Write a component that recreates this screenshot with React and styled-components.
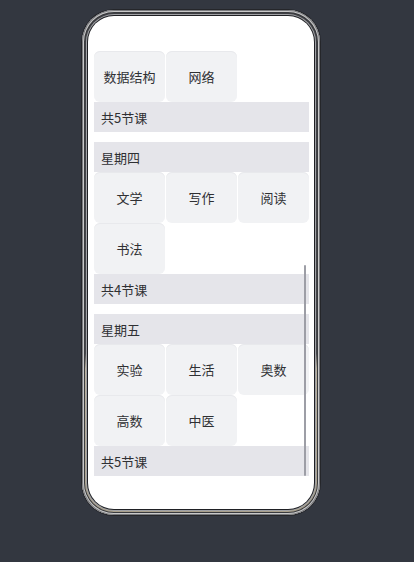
import React from "react";
import styled, { createGlobalStyle } from "styled-components";

const Global = createGlobalStyle`
  html, body { margin: 0; padding: 0; background: #333740; }
  body { font-family: "Noto Sans CJK SC", "Noto Sans", sans-serif; }
`;

const Stage = styled.div`
  width: 414px;
  height: 562px;
  padding: 10px 0 0 82px;
  box-sizing: border-box;
`;

const Frame = styled.div`
  width: 238px;
  height: 505px;
  box-sizing: border-box;
  padding: 6px;
  border-radius: 32px;
  background: linear-gradient(180deg, #3e3f43 0%, #46474b 68%, #b9b09c 71%, #a89f8b 100%);
  box-shadow: inset 0 0 0 1px #7a7b7f, inset 0 0 0 2px #c9c9c9, inset 0 0 0 3px #3a3b3f, 0 0 0 1px #25262a;
`;

const Screen = styled.div`
  position: relative;
  width: 226px;
  height: 493px;
  border-radius: 26px;
  background: #ffffff;
  overflow: hidden;
  box-shadow: 0 0 0 1px #1f2024, 0 0 0 2px #a0a1a5;
`;

const List = styled.div`
  display: flex;
  flex-direction: column;
  gap: 10px;
  padding: 35px 5px 0 6px;
`;

const Section = styled.div`
  display: flex;
  flex-direction: column;
`;

const Bar = styled.div`
  height: 30px;
  display: flex;
  align-items: center;
  padding-left: 7px;
  background: #e5e5ea;
  color: #2f3033;
  font-size: 13px;
`;

const Grid = styled.div`
  display: grid;
  grid-template-columns: repeat(3, 71px);
  column-gap: 1px;
`;

const Card = styled.div`
  height: 51px;
  display: flex;
  align-items: center;
  justify-content: center;
  background: #f1f2f4;
  border-radius: 6px;
  color: #2f3033;
  font-size: 13px;
  box-shadow: inset 0 1px 0 #e8e9ec;
`;

const ScrollThumb = styled.div`
  position: absolute;
  left: 216px;
  top: 249px;
  width: 2px;
  height: 211px;
  border-radius: 1px;
  background: #9d9ea6;
`;

const sections = [
  { header: null, items: ["数据结构", "网络"], footer: "共5节课" },
  { header: "星期四", items: ["文学", "写作", "阅读", "书法"], footer: "共4节课" },
  { header: "星期五", items: ["实验", "生活", "奥数", "高数", "中医"], footer: "共5节课" },
];

export default function App() {
  return (
    <>
      <Global />
      <Stage>
        <Frame>
          <Screen>
            <List>
              {sections.map((s, i) => (
                <Section key={i}>
                  {s.header && <Bar>{s.header}</Bar>}
                  <Grid>
                    {s.items.map((it) => (
                      <Card key={it}>{it}</Card>
                    ))}
                  </Grid>
                  <Bar>{s.footer}</Bar>
                </Section>
              ))}
            </List>
            <ScrollThumb />
          </Screen>
        </Frame>
      </Stage>
    </>
  );
}
